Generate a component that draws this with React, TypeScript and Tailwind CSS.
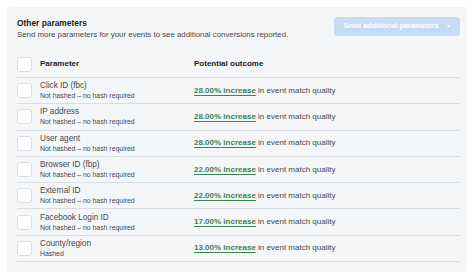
import React from 'react';

type Param = { name: string; hash: string; pct: string };

const params: Param[] = [
    { name: 'Click ID (fbc)', hash: 'Not hashed – no hash required', pct: '28.00%' },
    { name: 'IP address', hash: 'Not hashed – no hash required', pct: '28.00%' },
    { name: 'User agent', hash: 'Not hashed – no hash required', pct: '28.00%' },
    { name: 'Browser ID (fbp)', hash: 'Not hashed – no hash required', pct: '22.00%' },
    { name: 'External ID', hash: 'Not hashed – no hash required', pct: '22.00%' },
    { name: 'Facebook Login ID', hash: 'Not hashed – no hash required', pct: '17.00%' },
    { name: 'County/region', hash: 'Hashed', pct: '13.00%' },
];

function Box() {
    return <div className="h-[15px] w-[15px] shrink-0 rounded-[3px] border border-[#dadde1] bg-white" />;
}

export default function App() {
    return (
        <main className="min-h-screen bg-white p-[7px] font-['Liberation_Sans',Arial,sans-serif] text-[#1c1e21]">
            <section className="w-[460px] rounded-[4px] bg-[#f5f6f7] pb-[10px] pl-[10px] pr-[7px] pt-[10px]">
                <div className="flex items-start justify-between">
                    <div>
                        <h2 className="whitespace-nowrap text-[8.4px] font-bold leading-[12px]">Other parameters</h2>
                        <p className="whitespace-nowrap text-[7.85px] leading-[12px] text-[#444950]">
                            Send more parameters for your events to see additional conversions reported.
                        </p>
                    </div>
                    <button className="flex h-[19px] w-[126px] items-center justify-center gap-[7px] whitespace-nowrap rounded-[3px] bg-[#c8dbf5] text-[7.3px] font-bold text-white">
                        Send additional parameters
                        <span className="text-[5px]">▼</span>
                    </button>
                </div>

                <div className="mt-[10px]">
                    <div className="flex h-[27px] items-center border-b border-[#dadde1]">
                        <Box />
                        <div className="ml-[8px] w-[154px] text-[8px] font-bold">Parameter</div>
                        <div className="text-[8px] font-bold">Potential outcome</div>
                    </div>
                    {params.map((p) => (
                        <div key={p.name} className="flex h-[26.3px] items-center border-b border-[#dadde1]">
                            <Box />
                            <div className="ml-[8px] w-[154px]">
                                <div className="whitespace-nowrap text-[8.2px] leading-[11px] text-[#444950]">{p.name}</div>
                                <div className="whitespace-nowrap text-[6.9px] leading-[10px] text-[#444950]">{p.hash}</div>
                            </div>
                            <div className="whitespace-nowrap text-[8px] text-[#444950]">
                                <span className="font-bold text-[#3b8257] underline decoration-[#3b8257] underline-offset-[1.5px]">
                                    {p.pct} increase
                                </span>{' '}
                                in event match quality
                            </div>
                        </div>
                    ))}
                </div>
            </section>
        </main>
    );
}
